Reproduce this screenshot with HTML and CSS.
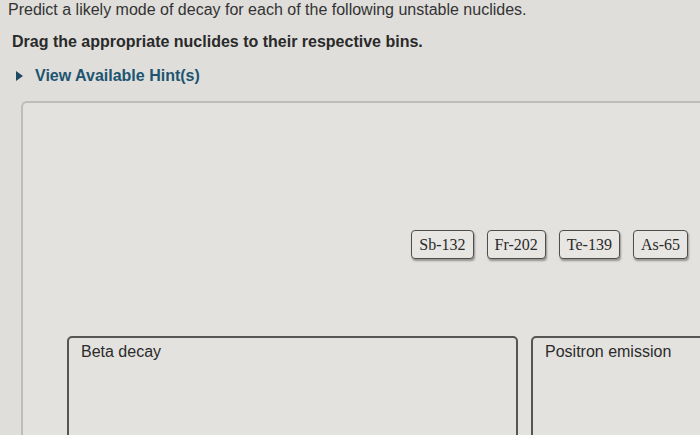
FILE: index.html
```html
<!DOCTYPE html>
<html>
<head>
<meta charset="utf-8">
<link rel="stylesheet" href="styles.css">
</head>
<body>
<div class="page">
  <p class="prompt">Predict a likely mode of decay for each of the following unstable nuclides.</p>
  <p class="instr">Drag the appropriate nuclides to their respective bins.</p>
  <div class="hint"><span class="tri"></span>View Available Hint(s)</div>
  <div class="board">
    <div class="chips">
      <span class="chip">Sb-132</span>
      <span class="chip">Fr-202</span>
      <span class="chip">Te-139</span>
      <span class="chip">As-65</span>
    </div>
    <div class="bins">
      <div class="bin"><span class="label">Beta decay</span></div>
      <div class="bin"><span class="label">Positron emission</span></div>
    </div>
  </div>
</div>
</body>
</html>
```
FILE: styles.css
```css
html, body {
  margin: 0;
  padding: 0;
  height: 100%;
  overflow: hidden;
}
body {
  background: #dfdedb;
  font-family: "Liberation Sans", Arial, sans-serif;
  color: #2b2b2b;
}
.page {
  padding: 0 0 0 8px;
}
.prompt {
  margin: 0;
  font-size: 16px;
  line-height: 20px;
  color: #333;
}
.instr {
  margin: 12px 0 0 4px;
  font-size: 16px;
  font-weight: bold;
  line-height: 20px;
  color: #2a2a2a;
}
.hint {
  margin: 14px 0 0 8px;
  font-size: 16px;
  font-weight: bold;
  line-height: 20px;
  color: #1d5570;
  display: flex;
  align-items: center;
}
.tri {
  width: 0;
  height: 0;
  border-top: 5px solid transparent;
  border-bottom: 5px solid transparent;
  border-left: 7px solid #1d4a60;
  margin-right: 12px;
}
.board {
  margin: 15px -30px 0 13px;
  border-top: 2px solid #bdbcb8;
  border-left: 2px solid #bdbcb8;
  border-top-left-radius: 6px;
  background: #e3e2df;
  height: 400px;
  padding-left: 44px;
}
.chips {
  display: flex;
  justify-content: flex-end;
  gap: 13px;
  padding: 127px 42px 0 0;
}
.chip {
  display: flex;
  align-items: center;
  justify-content: center;
  height: 27px;
  padding: 0 7px;
  border: 1.5px solid #4e4e4e;
  border-radius: 4px;
  background: #e7e6e3;
  box-shadow: 1px 2px 2px rgba(0,0,0,0.35);
  font-family: "Liberation Serif", "Times New Roman", serif;
  font-size: 16px;
  color: #2a2a2a;
}
.bins {
  display: grid;
  grid-template-columns: 451px 1fr;
  gap: 13px;
  margin-top: 77px;
}
.bin {
  height: 150px;
  border: 2px solid #555;
  border-radius: 5px;
  padding: 5px 0 0 12px;
}
.label {
  font-size: 16px;
  color: #2b2b2b;
}
```
